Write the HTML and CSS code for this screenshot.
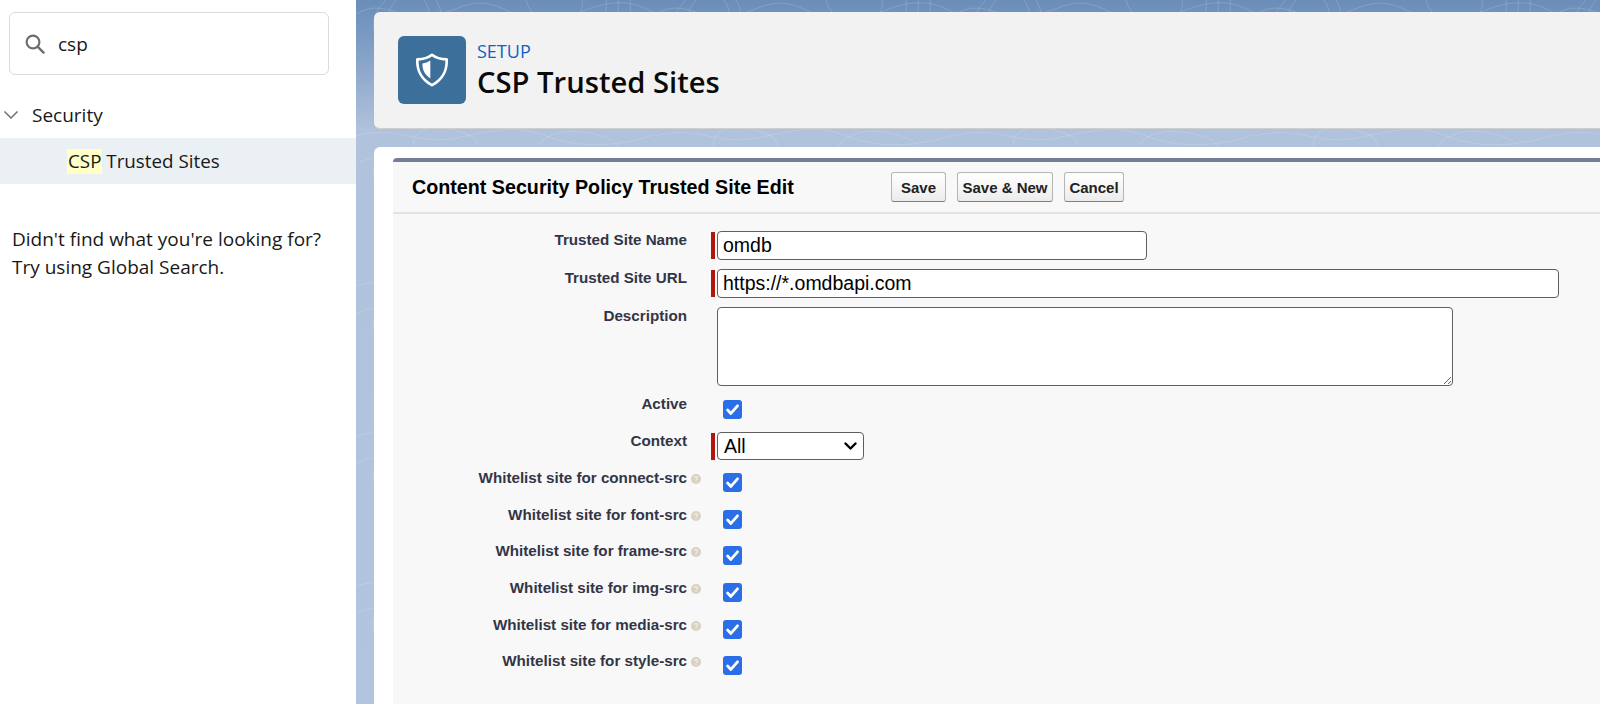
FILE: index.html
```html
<!DOCTYPE html>
<html lang="en">
<head>
<meta charset="utf-8">
<title>CSP Trusted Sites</title>
<link rel="stylesheet" href="styles.css">
</head>
<body>
<svg class="defs" width="0" height="0" aria-hidden="true">
  <symbol id="tick" viewBox="0 0 19 19"><path d="M4.6 10l3.3 3.4 6.6-7.6" fill="none" stroke="#fff" stroke-width="2.8" stroke-linecap="round" stroke-linejoin="round"/></symbol>
  <symbol id="help" viewBox="0 0 10 10"><circle cx="5" cy="5" r="5" fill="#d9d2c2"/><path d="M3.500 3.900a1.500 1.400 0 1 1 2.200 1.300c-.5.3-.7.5-.7 1" fill="none" stroke="#f4f1ea" stroke-width="1.100"/><circle cx="5" cy="7.600" r=".7" fill="#f4f1ea"/></symbol>
</svg>
<div class="app">
  <aside class="side">
    <div class="search">
      <svg class="search-icon" width="20" height="20" viewBox="0 0 20 20"><circle cx="8" cy="8" r="6.400" fill="none" stroke="#706e6b" stroke-width="2.200"/><path d="M12.600 12.600l6 6" stroke="#706e6b" stroke-width="2.400" stroke-linecap="round"/></svg>
      <span>csp</span>
    </div>
    <div class="tree-head">
      <svg class="chev" width="16" height="10" viewBox="0 0 16 10"><path d="M1.500 1.500L8 8l6.500-6.500" fill="none" stroke="#706e6b" stroke-width="1.500"/></svg>
      <span>Security</span>
    </div>
    <div class="tree-row"><mark class="hit">CSP</mark>&nbsp;Trusted Sites</div>
    <p class="hint">Didn't find what you're looking for?<br>Try using Global Search.</p>
  </aside>
  <main class="main">
    <svg class="texture" width="100%" height="100%" aria-hidden="true">
      <defs>
        <pattern id="topo" width="300" height="150" patternUnits="userSpaceOnUse">
          <g fill="none" stroke="#fff" stroke-opacity=".14" stroke-width="1">
            <path d="M0 14c30-18 50 12 80 2s40-20 70-6 50 12 80 0 50-8 70 4"/>
            <path d="M0 136c40-12 60 10 100 2s60-14 90-2 70 12 110-2"/>
            <path d="M40 0c-14 16-10 34 10 34s30-18 18-34"/>
            <path d="M30 0c-22 22-16 46 20 46S92 20 80 0"/>
            <path d="M170 0c4 14 16 26 34 24s24-14 22-24"/>
            <path d="M250 0c2 20-8 30 0 42M262 0c2 20-6 30 2 44M274 0c2 18-4 30 4 40"/>
            <path d="M60 150c-10-14 10-26 30-22s36 10 30 22"/>
            <path d="M180 150c4-12 24-22 48-18s34 10 36 18"/>
          </g>
        </pattern>
      </defs>
      <rect width="100%" height="100%" fill="url(#topo)"/>
    </svg>
    <header class="page-head">
      <div class="page-icon">
        <svg class="shield" width="36" height="36" viewBox="0 0 32 32"><path d="M16 2.500c3 2.500 8 4 13 4 .6 8.500-3 17.500-13 23C6 24 2.400 15 3 6.500c5 0 10-1.500 13-4z" fill="none" stroke="#fff" stroke-width="2.400" stroke-linejoin="round"/><path d="M14.500 7.500v16C10 20.500 7.200 16 7.500 10.200c2.500-.4 5-1.400 7-2.700z" fill="#fff"/></svg>
      </div>
      <div class="page-titles">
        <div class="eyebrow">SETUP</div>
        <h1 class="page-title">CSP Trusted Sites</h1>
      </div>
    </header>
    <section class="card">
      <div class="block">
        <div class="block-head">
          <h2 class="block-title">Content Security Policy Trusted Site Edit</h2>
          <div class="btns">
            <button class="btn btn-save" type="button">Save</button>
            <button class="btn btn-new" type="button">Save &amp; New</button>
            <button class="btn btn-cancel" type="button">Cancel</button>
          </div>
        </div>
        <form class="form">
          <div class="row row-text">
            <label class="label">Trusted Site Name</label><span class="slot"></span><span class="req"></span>
            <input class="input input-name" type="text" value="omdb">
          </div>
          <div class="row row-text">
            <label class="label">Trusted Site URL</label><span class="slot"></span><span class="req"></span>
            <input class="input input-url" type="text" value="https://*.omdbapi.com">
          </div>
          <div class="row row-desc">
            <label class="label">Description</label><span class="slot"></span><span class="noreq"></span>
            <textarea class="area"></textarea>
          </div>
          <div class="row row-check">
            <label class="label">Active</label><span class="slot"></span><span class="noreq"></span>
            <span class="check check-active"><svg width="19" height="19"><use href="#tick"/></svg></span>
          </div>
          <div class="row row-check">
            <label class="label">Context</label><span class="slot"></span><span class="req"></span>
            <span class="select-wrap">
              <select class="select"><option>All</option></select>
              <svg class="select-arrow" width="13" height="8" viewBox="0 0 13 8"><path d="M1.500 1.500l5 5 5-5" fill="none" stroke="#000" stroke-width="2.400" stroke-linecap="round" stroke-linejoin="round"/></svg>
            </span>
          </div>
          <div class="row row-wl">
            <label class="label">Whitelist site for connect-src</label><span class="slot"><svg class="help" width="10" height="10"><use href="#help"/></svg></span><span class="noreq"></span>
            <span class="check"><svg width="19" height="19"><use href="#tick"/></svg></span>
          </div>
          <div class="row row-wl">
            <label class="label">Whitelist site for font-src</label><span class="slot"><svg class="help" width="10" height="10"><use href="#help"/></svg></span><span class="noreq"></span>
            <span class="check"><svg width="19" height="19"><use href="#tick"/></svg></span>
          </div>
          <div class="row row-wl">
            <label class="label">Whitelist site for frame-src</label><span class="slot"><svg class="help" width="10" height="10"><use href="#help"/></svg></span><span class="noreq"></span>
            <span class="check"><svg width="19" height="19"><use href="#tick"/></svg></span>
          </div>
          <div class="row row-wl">
            <label class="label">Whitelist site for img-src</label><span class="slot"><svg class="help" width="10" height="10"><use href="#help"/></svg></span><span class="noreq"></span>
            <span class="check"><svg width="19" height="19"><use href="#tick"/></svg></span>
          </div>
          <div class="row row-wl">
            <label class="label">Whitelist site for media-src</label><span class="slot"><svg class="help" width="10" height="10"><use href="#help"/></svg></span><span class="noreq"></span>
            <span class="check"><svg width="19" height="19"><use href="#tick"/></svg></span>
          </div>
          <div class="row row-wl">
            <label class="label">Whitelist site for style-src</label><span class="slot"><svg class="help" width="10" height="10"><use href="#help"/></svg></span><span class="noreq"></span>
            <span class="check"><svg width="19" height="19"><use href="#tick"/></svg></span>
          </div>
        </form>
      </div>
    </section>
  </main>
</div>
</body>
</html>
```
FILE: styles.css
```css
* { box-sizing: border-box; }
html, body { margin: 0; height: 704px; overflow: hidden; }
body { font-family: "Open Sans", sans-serif; color: #181818; background: #fff; }
.defs { position: absolute; }
.app { display: flex; height: 704px; }

.side { width: 356px; flex: none; background: #fff; padding-top: 12px; font-size: 19px; }
.search { margin: 0 27px 0 9px; height: 63px; border: 1px solid #dddbda; border-radius: 6px; display: flex; align-items: center; padding-left: 15px; gap: 13px; font-size: 19px; }
.search-icon { flex: none; }
.tree-head { display: flex; align-items: center; height: 25px; margin-top: 27px; padding-left: 3px; gap: 13px; }
.tree-row { margin-top: 11px; height: 46px; background: #ebf0f4; padding-left: 67px; display: flex; align-items: center; font-size: 18.8px; }
.hit { background: #ffffc8; color: inherit; height: 25px; line-height: 25px; padding: 0 1px; margin-right: -1px; }
.hint { margin: 41px 0 0 12px; line-height: 28px; }

.main { flex: 1; position: relative; overflow: hidden; padding: 12px 0 0 18px; background: linear-gradient(#6a8eb9 0, #7f9dc5 45px, #b0c2dc 130px, #b3c4de 100%); }
.texture { position: absolute; left: 0; top: 0; }
.page-head { position: relative; height: 117px; background: #f2f2f2; border-radius: 6px 0 0 6px; border-bottom: 1px solid #cfcfcf; display: flex; align-items: center; padding-left: 24px; gap: 11px; }
.page-icon { width: 68px; height: 68px; border-radius: 6px; background: #3d6f9b; display: flex; align-items: center; justify-content: center; }
.shield { margin-top: -1px; }
.eyebrow { font-size: 18px; line-height: 24px; color: #0f62c4; margin-top: -1px; }
.page-title { margin: 1px 0 0; font-size: 29.2px; line-height: 37px; font-weight: 600; color: #0a0a0a; }

.card { position: relative; margin-top: 18px; height: 600px; background: #fff; border-radius: 6px 0 0 0; padding: 11px 0 0 19px; }
.block { height: 100%; background: #f8f8f8; border-top: 4px solid #747e96; border-radius: 4px 0 0 0; font-family: "Liberation Sans", Arial, sans-serif; }
.block-head { height: 52px; border-bottom: 2px solid #e3e3e3; display: flex; align-items: center; padding-left: 19px; }
.block-title { margin: 0; width: 479px; flex: none; font-size: 19.7px; font-weight: 700; color: #000; }
.btns { display: flex; gap: 11px; }
.btn { height: 30px; padding: 0; border: 1px solid #b5b5b5; border-bottom-color: #7f7f7f; border-radius: 3px; background: linear-gradient(#fff, #ececec); font: 700 15px "Liberation Sans", Arial, sans-serif; color: #222; }
.btn-save { width: 55px; }
.btn-new { width: 96px; }
.btn-cancel { width: 60px; }

.form { padding-top: 17px; }
.row { display: flex; align-items: flex-start; }
.row-text { height: 38px; }
.row-desc { height: 88px; }
.row-check { height: 37px; }
.row-wl { height: 36.7px; }
.label { width: 294px; flex: none; text-align: right; font-size: 15.2px; line-height: 17px; font-weight: 700; color: #333547; }
.slot { width: 24px; flex: none; padding-left: 4px; height: 16px; }
.help { display: block; margin-top: 5px; }
.req { width: 4px; height: 27px; margin-top: 1px; margin-right: 2px; flex: none; background: #b1160e; }
.noreq { width: 6px; flex: none; }
.input, .area, .select { border: 1px solid #5f5f5f; border-radius: 4px; background: #fff; color: #000; font: 19.5px "Liberation Sans", Arial, sans-serif; }
.input { height: 29px; padding: 0 5px; }
.input-name { width: 430px; }
.input-url { width: 842px; }
.area { width: 736px; height: 79px; display: block; }
.select-wrap { position: relative; display: block; width: 147px; height: 28px; }
.select { appearance: none; display: block; width: 147px; height: 28px; padding: 0 0 0 6px; }
.select-arrow { position: absolute; right: 7px; top: 10px; pointer-events: none; }
.check { display: block; width: 19px; height: 19px; margin: 4px 0 0 6px; border-radius: 3px; background: #2a6fe8; }
.check-active { margin-top: 5px; }
.check svg { display: block; }
```
